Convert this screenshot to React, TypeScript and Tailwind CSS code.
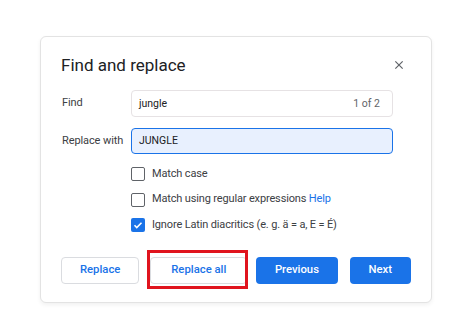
import React from "react";

const font = { fontFamily: "Roboto, 'Liberation Sans', Arial, sans-serif" };

function Box({ checked }: { checked?: boolean }) {
  if (checked)
    return (
      <span className="flex h-[14px] w-[14px] shrink-0 items-center justify-center rounded-[2px] bg-[#1a73e8]">
        <svg viewBox="0 0 24 24" className="h-[12px] w-[12px]" fill="none" stroke="white" strokeWidth="3.2">
          <path d="M5 12.5l4.5 4.5L19 7.5" />
        </svg>
      </span>
    );
  return <span className="h-[14px] w-[14px] shrink-0 rounded-[2px] border-[1.5px] border-[#5f6368] bg-white" />;
}

export default function App() {
  const options = [
    { label: "Match case" },
    { label: "Match using regular expressions", help: true },
    { label: "Ignore Latin diacritics (e. g. ä = a, E = É)", checked: true },
  ];

  return (
    <div className="h-[336px] w-[474px] bg-white pl-[40px] pt-[36px]" style={font}>
      <div className="flex h-[267px] w-[392px] flex-col rounded-[6px] border border-[#e3e3e3] bg-white px-[20px] pt-[16px] shadow-[0_2px_4px_rgba(0,0,0,0.06)]">
        <div className="flex h-[24px] items-center justify-between">
          <h1 className="text-[17px] leading-[24px] text-[#202124]">Find and replace</h1>
          <svg viewBox="0 0 24 24" className="mr-[4px] -mt-[1px] h-[16px] w-[16px]" fill="none" stroke="#5f6368" strokeWidth="1.8">
            <path d="M6.5 6.5l11 11M17.5 6.5l-11 11" />
          </svg>
        </div>

        <div className="mt-[13px] flex items-center">
          <span className="w-[70px] shrink-0 pl-[1px] text-[11px] tracking-[-0.1px] text-[#3c4043]">Find</span>
          <div className="flex h-[27px] w-[262px] items-center justify-between rounded-[4px] border border-[#e6e2e4] px-[7px] text-[10.5px] text-[#202124]">
            <span>jungle</span>
            <span className="pr-[5px] text-[#5f6368]">1 of 2</span>
          </div>
        </div>

        <div className="mt-[11px] flex items-center">
          <span className="w-[70px] shrink-0 whitespace-nowrap pl-[1px] text-[11px] tracking-[-0.1px] text-[#3c4043]">Replace with</span>
          <div className="flex h-[26px] w-[262px] items-center rounded-[4px] border-[1.5px] border-[#1a73e8] bg-[#e8f0fe] px-[7px] text-[10.5px] text-[#202124]">
            JUNGLE
          </div>
        </div>

        <div className="mt-[13px] flex flex-col gap-[11.5px] pl-[70px]">
          {options.map((o) => (
            <div key={o.label} className="flex h-[14px] items-center gap-[7px] whitespace-nowrap text-[11px] tracking-[-0.15px] text-[#3c4043]">
              <Box checked={o.checked} />
              <span>
                {o.label}
                {o.help && <span className="text-[#1a73e8]"> Help</span>}
              </span>
            </div>
          ))}
        </div>

        <div className="mt-[25px] flex h-[27px] items-center text-[11.3px] font-medium">
          <button className="h-[27px] w-[79px] rounded-[4px] border border-[#dadce0] text-[#1a73e8]">Replace</button>
          <div className="relative ml-[11px]">
            <button className="h-[27px] w-[97px] rounded-[4px] border border-[#dadce0] text-[#1a73e8]">Replace all</button>
            <span className="absolute -bottom-[5px] -left-[3px] -right-[1px] -top-[7px] border-[3px] border-[#e0141e]" />
          </div>
          <button className="ml-[9px] h-[27px] w-[82px] rounded-[4px] bg-[#1a73e8] text-white">Previous</button>
          <button className="ml-[12px] h-[27px] w-[62px] rounded-[4px] bg-[#1a73e8] text-white">Next</button>
        </div>
      </div>
    </div>
  );
}
